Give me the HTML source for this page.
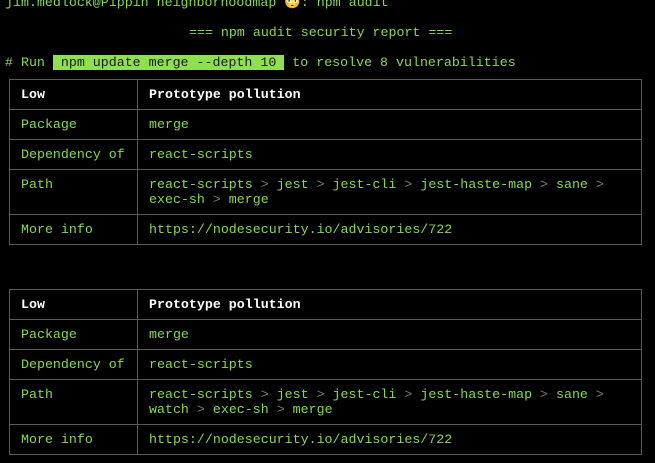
<!DOCTYPE html>
<html><head><style>
body{margin:0;width:655px;height:463px;background:#000;overflow:hidden;font-family:"Liberation Mono",monospace;font-size:13.3px;color:#86d94f;position:relative}
.l{position:absolute;white-space:pre;line-height:16px}
.hl{background:#8ee04e;color:#1a1a1a}
table{position:absolute;left:9px;width:633px;border-collapse:collapse}
td{border:1px solid #5a5a5a;padding:0 11px;height:29px;line-height:15px;vertical-align:middle}
td:first-child{width:105px}
tr.t td{color:#fff;font-weight:bold}
tr.p td{height:37px;vertical-align:top;padding-top:7px}
.g{color:#777}
</style></head><body>
<div class="l" style="top:-5px;left:5px">jim.medlock@Pippin neighborhoodmap 😳: npm audit</div>
<div class="l" style="top:25px;left:189px">=== npm audit security report ===</div>
<div class="l" style="top:55px;left:5px"># Run <span class="hl"> npm update merge --depth 10 </span> to resolve 8 vulnerabilities</div>
<table style="top:79px">
<tr class="t"><td>Low</td><td>Prototype pollution</td></tr>
<tr><td>Package</td><td>merge</td></tr>
<tr><td>Dependency of</td><td>react-scripts</td></tr>
<tr class="p"><td>Path</td><td>react-scripts <span class="g">&gt;</span> jest <span class="g">&gt;</span> jest-cli <span class="g">&gt;</span> jest-haste-map <span class="g">&gt;</span> sane <span class="g">&gt;</span><br>exec-sh <span class="g">&gt;</span> merge</td></tr>
<tr><td>More info</td><td>https://nodesecurity.io/advisories/722</td></tr>
</table>
<table style="top:289px">
<tr class="t"><td>Low</td><td>Prototype pollution</td></tr>
<tr><td>Package</td><td>merge</td></tr>
<tr><td>Dependency of</td><td>react-scripts</td></tr>
<tr class="p"><td>Path</td><td>react-scripts <span class="g">&gt;</span> jest <span class="g">&gt;</span> jest-cli <span class="g">&gt;</span> jest-haste-map <span class="g">&gt;</span> sane <span class="g">&gt;</span><br>watch <span class="g">&gt;</span> exec-sh <span class="g">&gt;</span> merge</td></tr>
<tr><td>More info</td><td>https://nodesecurity.io/advisories/722</td></tr>
</table>
</body></html>
